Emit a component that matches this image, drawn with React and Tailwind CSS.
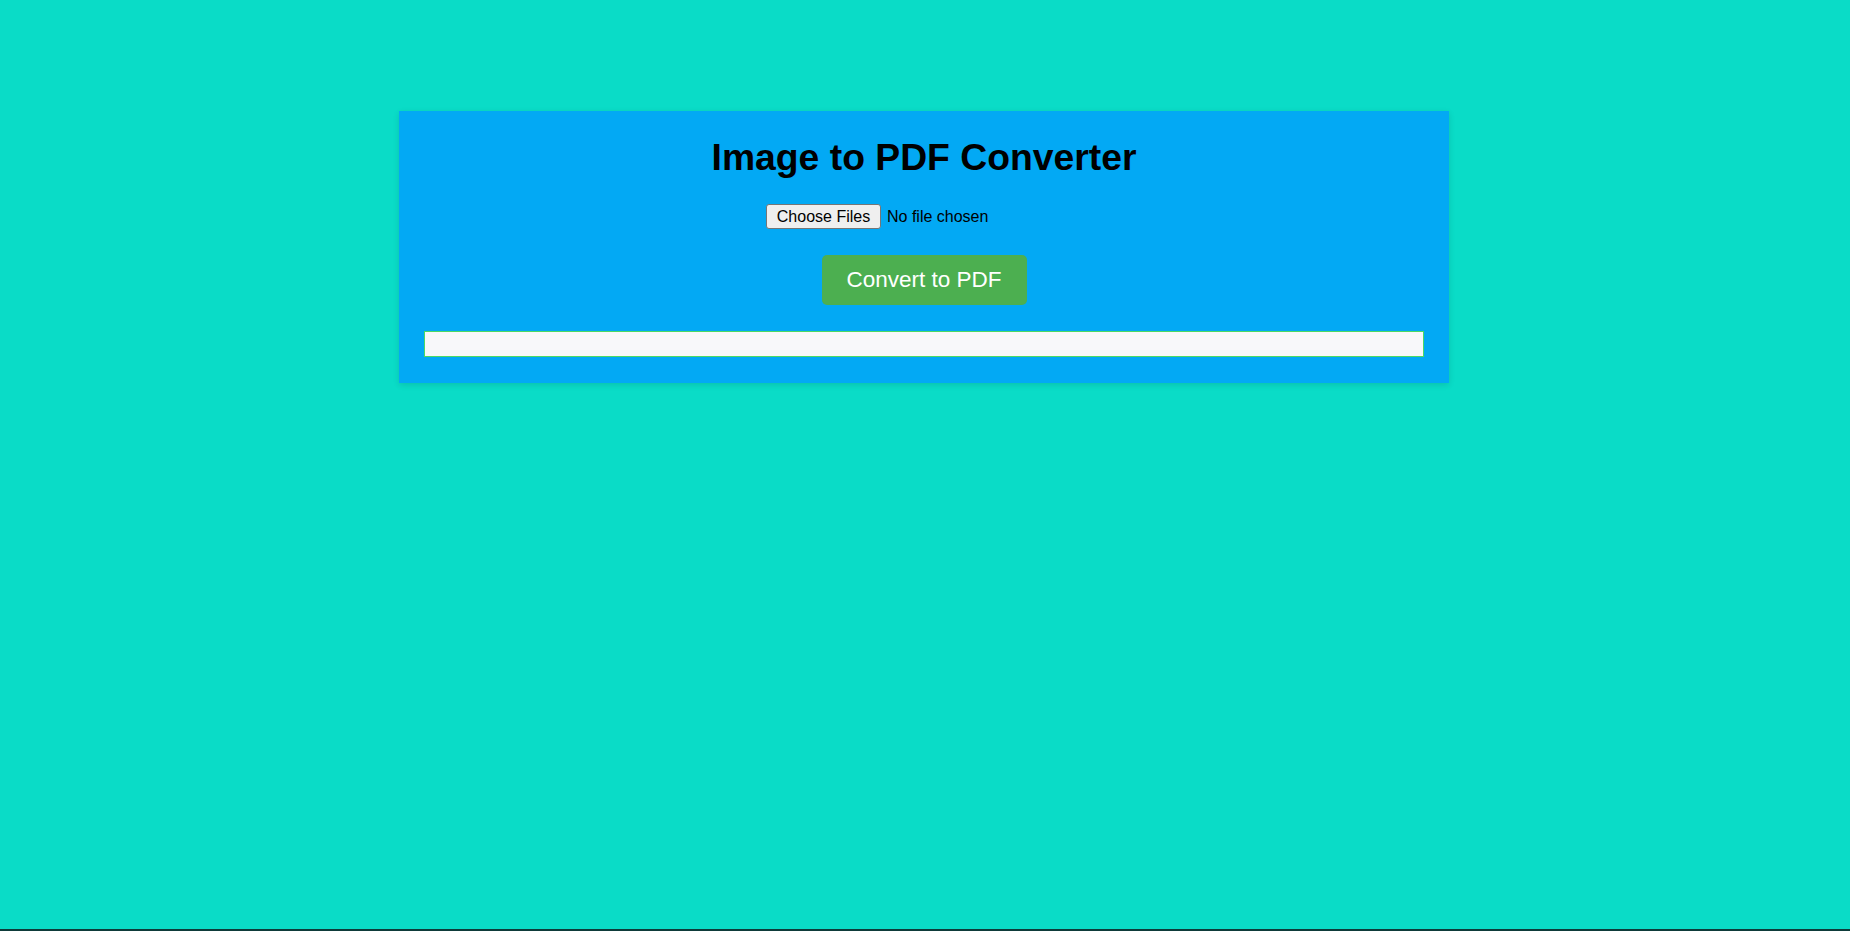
import React, { useState } from 'react';

export default function App() {
  const [files, setFiles] = useState([]);
  const [progress, setProgress] = useState(0);

  const fileLabel =
    files.length === 0 ? 'No file chosen' : files.length === 1 ? files[0].name : `${files.length} files`;

  const convert = () => {
    if (!files.length) return;
    setProgress(100);
  };

  return (
    <div className="h-screen flex flex-col bg-[#0adcc7] font-['Liberation_Sans',Arial,sans-serif]">
      <main className="flex-1 pt-[111px]">
        <div className="w-[1050px] ml-[calc(50%-526px)] bg-[#03a9f4] px-[25px] pt-[24px] pb-[26px] shadow-[0_2px_6px_rgba(0,0,0,0.12)] flex flex-col">
          <h1 className="text-center text-[37.3px] leading-[44px] font-bold text-black">
            Image to PDF Converter
          </h1>

          <div className="w-[316px] mx-auto mt-[25px] h-[25px] flex items-center text-[16px] text-black">
            <label className="flex items-center cursor-default">
              <input
                type="file"
                multiple
                accept="image/*"
                className="hidden"
                onChange={(e) => setFiles(Array.from(e.target.files || []))}
              />
              <span className="h-[25px] w-[115px] flex items-center justify-center bg-[#efefef] border border-[#767676] rounded-[3px] leading-none">
                Choose Files
              </span>
              <span className="ml-[6px] leading-none">{fileLabel}</span>
            </label>
          </div>

          <div className="mt-[26px] flex justify-center">
            <button
              onClick={convert}
              className="w-[205px] h-[50px] bg-[#4caf50] text-white text-[22.5px] rounded-[5px] flex items-center justify-center"
            >
              Convert to PDF
            </button>
          </div>

          <div className="mt-[26px] h-[26px] bg-[#f8f8fa] border border-[#4cd964]">
            <div className="h-full bg-[#4caf50]" style={{ width: `${progress}%` }} />
          </div>
        </div>
      </main>
      <div className="h-[2px] bg-[#0e3b3a]" />
    </div>
  );
}
